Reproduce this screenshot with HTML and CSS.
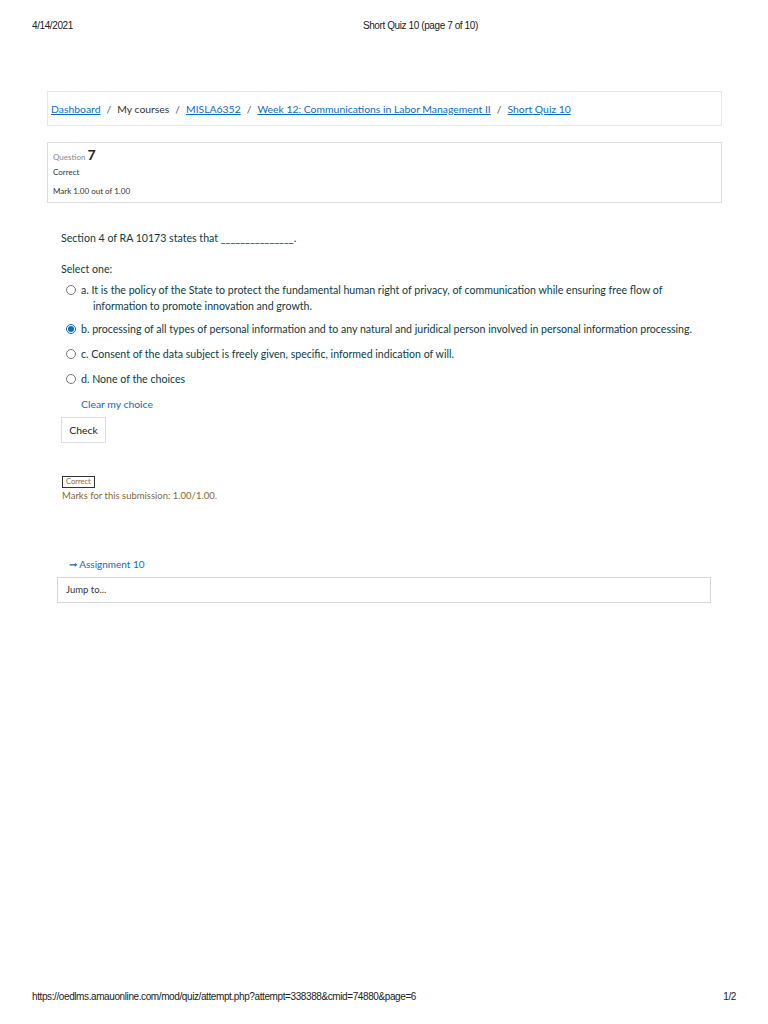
FILE: index.html
```html
<!DOCTYPE html>
<html>
  <head>
    <meta charset="UTF-8">
    <meta name="viewport" content="width=device-width,initial-scale=1">
    <title>Short Quiz 10 (page 7 of 10)</title>
    <link rel="stylesheet" href="styles.css">
  </head>
  <body>

    <div class="print-head">
      <span class="print-date">4/14/2021</span>
      <span class="print-title">Short Quiz 10 (page 7 of 10)</span>
    </div>

    <div class="page">
      <nav class="breadcrumb">
        <a href="#">Dashboard</a><span class="sep">/</span>
        <span class="crumb">My courses</span><span class="sep">/</span>
        <a href="#">MISLA6352</a><span class="sep">/</span>
        <a href="#">Week 12: Communications in Labor Management II</a><span class="sep">/</span>
        <a href="#">Short Quiz 10</a>
      </nav>

      <div class="qinfo">
        <div class="qno">Question <b>7</b></div>
        <div class="state">Correct</div>
        <div class="grade">Mark 1.00 out of 1.00</div>
      </div>

      <div class="formulation">
        <p class="qtext">Section 4 of RA 10173 states that _______________.</p>
        <p class="prompt">Select one:</p>

        <div class="answer">
          <label class="choice">
            <input type="radio" name="q7">
            <span>a. It is the policy of the State to protect the fundamental human right of privacy, of communication while ensuring free flow of information to promote innovation and growth.</span>
          </label>
          <label class="choice">
            <input type="radio" name="q7" checked>
            <span>b. processing of all types of personal information and to any natural and juridical person involved in personal information processing.</span>
          </label>
          <label class="choice">
            <input type="radio" name="q7">
            <span>c. Consent of the data subject is freely given, specific, informed indication of will.</span>
          </label>
          <label class="choice">
            <input type="radio" name="q7">
            <span>d. None of the choices</span>
          </label>
        </div>

        <a href="#" class="clear">Clear my choice</a>
        <button type="button" class="check">Check</button>
      </div>

      <div class="feedback">
        <span class="badge">Correct</span>
        <div class="marks">Marks for this submission: 1.00/1.00.</div>
      </div>

      <a href="#" class="prev">&#10142; Assignment 10</a>
      <div class="jump">Jump to...</div>
    </div>

    <div class="print-foot">
      <span>https://oedlms.amauonline.com/mod/quiz/attempt.php?attempt=338388&amp;cmid=74880&amp;page=6</span>
      <span>1/2</span>
    </div>

  </body>
</html>
```

FILE: styles.css
```css
body {
  margin: 0;
  width: 768px;
  height: 1024px;
  position: relative;
  background: #fff;
  font-family: Lato, "Open Sans", sans-serif;
  font-size: 10px;
  color: #1d2125;
}

a {
  color: #0f6cbf;
}

/* Print header / footer */
.print-head {
  display: flex;
  padding: 20px 32px 0 32px;
  font-family: "Liberation Sans", Arial, sans-serif;
  font-size: 10px;
  letter-spacing: -0.4px;
  color: #222;
}

.print-title {
  margin-left: 290px;
}

.print-foot {
  position: absolute;
  left: 32px;
  right: 32px;
  top: 991px;
  display: flex;
  justify-content: space-between;
  font-family: "Liberation Sans", Arial, sans-serif;
  font-size: 10px;
  letter-spacing: -0.4px;
  color: #222;
}

.page {
  padding: 60px 46px 0 47px;
}

/* Breadcrumb bar */
.breadcrumb {
  border: 1px solid #e6e6e6;
  height: 33px;
  display: flex;
  align-items: center;
  padding-left: 3px;
  font-size: 10.4px;
}

.breadcrumb a {
  color: #0f6cbf;
}

.breadcrumb .crumb {
  color: #333;
}

.breadcrumb .sep {
  color: #555;
  margin: 0 6px;
}

/* Question info box */
.qinfo {
  margin-top: 16px;
  border: 1px solid #dcdcdc;
  height: 61px;
  padding: 3px 5px 0 5px;
  box-sizing: border-box;
  color: #333;
  font-size: 8px;
}

.qno {
  color: #888;
}

.qno b {
  font-size: 14px;
  color: #222;
  font-weight: 700;
}

.state {
  margin-top: 4px;
}

.grade {
  margin-top: 9px;
}

/* Question body */
.formulation {
  padding: 29px 0 0 14px;
  color: #0c3b44;
  font-size: 10.6px;
}

.formulation .qtext {
  margin: 0;
}

.formulation .prompt {
  margin: 19px 0 0 0;
}

.answer {
  margin-top: 7px;
  padding-left: 5px;
}

.choice {
  display: flex;
  align-items: flex-start;
  line-height: 16px;
  margin-bottom: 9px;
  padding-right: 12px;
}

.choice:first-child {
  margin-bottom: 7px;
}

.choice input {
  width: 10px;
  height: 10px;
  margin: 3px 5px 0 0;
  flex: none;
  accent-color: #0f6cbf;
}

.choice span {
  padding-left: 12px;
  text-indent: -12px;
}

.clear {
  display: block;
  margin: 11px 0 0 20px;
  text-decoration: none;
  font-size: 10.4px;
}

.check {
  margin-top: 7px;
  width: 45px;
  height: 26px;
  background: #fff;
  border: 1px solid #dedede;
  font-family: inherit;
  font-size: 10.4px;
  color: #222;
  padding: 0;
}

/* Feedback */
.feedback {
  padding: 32px 0 0 15px;
  color: #8e662e;
  font-size: 9.5px;
}

.badge {
  display: inline-block;
  border: 1px solid #333;
  font-size: 7.5px;
  padding: 0 3px;
  line-height: 10px;
}

.marks {
  margin-top: 2px;
}

/* Activity navigation */
.prev {
  display: block;
  margin: 57px 0 0 22px;
  text-decoration: none;
  font-size: 10px;
}

.jump {
  margin: 7px 11px 0 10px;
  border: 1px solid #d6d6d6;
  height: 26px;
  box-sizing: border-box;
  padding: 6px 0 0 8px;
  font-size: 9.5px;
  color: #333;
}
```
